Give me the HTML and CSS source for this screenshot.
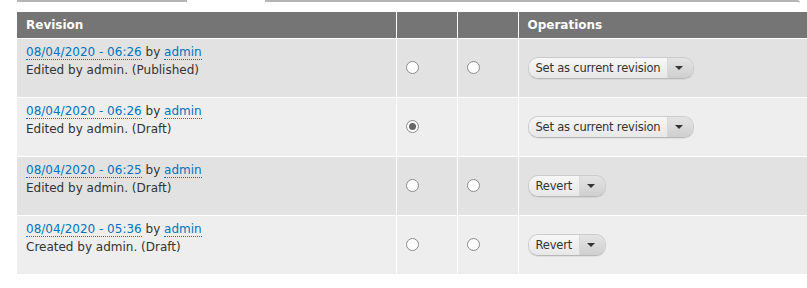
FILE: index.html
```html
<!DOCTYPE html>
<html>
<head>
<meta charset="utf-8">
<link rel="stylesheet" href="styles.css">
</head>
<body>
<div class="tabs">
  <div class="tab-line tab-a"></div>
  <div class="tab-gap"></div>
  <div class="tab-line tab-b"></div>
</div>
<table class="revisions">
  <thead>
    <tr>
      <th class="col-rev">Revision</th>
      <th class="col-radio"></th>
      <th class="col-radio"></th>
      <th class="col-ops">Operations</th>
    </tr>
  </thead>
  <tbody>
    <tr class="odd">
      <td class="rev"><a href="#">08/04/2020 - 06:26</a> by <a href="#">admin</a><br>Edited by admin. (Published)</td>
      <td class="radio-cell"><span class="radio"></span></td>
      <td class="radio-cell"><span class="radio"></span></td>
      <td class="ops"><span class="dropbutton"><span class="action">Set as current revision</span><span class="toggle"><span class="arrow"></span></span></span></td>
    </tr>
    <tr class="even">
      <td class="rev"><a href="#">08/04/2020 - 06:26</a> by <a href="#">admin</a><br>Edited by admin. (Draft)</td>
      <td class="radio-cell"><span class="radio checked"></span></td>
      <td class="radio-cell"></td>
      <td class="ops"><span class="dropbutton"><span class="action">Set as current revision</span><span class="toggle"><span class="arrow"></span></span></span></td>
    </tr>
    <tr class="odd">
      <td class="rev"><a href="#">08/04/2020 - 06:25</a> by <a href="#">admin</a><br>Edited by admin. (Draft)</td>
      <td class="radio-cell"><span class="radio"></span></td>
      <td class="radio-cell"><span class="radio"></span></td>
      <td class="ops"><span class="dropbutton"><span class="action">Revert</span><span class="toggle"><span class="arrow"></span></span></span></td>
    </tr>
    <tr class="even">
      <td class="rev"><a href="#">08/04/2020 - 05:36</a> by <a href="#">admin</a><br>Created by admin. (Draft)</td>
      <td class="radio-cell"><span class="radio"></span></td>
      <td class="radio-cell"><span class="radio"></span></td>
      <td class="ops"><span class="dropbutton"><span class="action">Revert</span><span class="toggle"><span class="arrow"></span></span></span></td>
    </tr>
  </tbody>
</table>
<div class="bottom-button"></div>
</body>
</html>
```
FILE: styles.css
```css
html, body {
  margin: 0;
  padding: 0;
  background: #fff;
  overflow: hidden;
}
body {
  width: 807px;
  height: 288px;
  font-family: "DejaVu Sans", Verdana, sans-serif;
  font-size: 12px;
  color: #333;
}
.tabs {
  display: flex;
  padding-left: 17px;
  height: 12px;
}
.tab-line {
  border-top: 2px solid #b4b4b4;
}
.tab-a { width: 170px; }
.tab-gap { width: 78px; }
.tab-b { width: 535px; border-top-right-radius: 3px; }
.revisions {
  margin-left: 17px;
  width: 810px;
  border-collapse: collapse;
  table-layout: fixed;
}
.revisions th {
  background: #757575;
  color: #fff;
  font-weight: bold;
  text-align: left;
  height: 26px;
  padding: 0 9px;
  border-left: 1px solid #fff;
  border-bottom: 1px solid #fff;
  line-height: 18px;
  box-sizing: border-box;
}
.revisions th:first-child, .revisions td:first-child { border-left: none; }
.col-rev { width: 379px; }
.col-radio { width: 61px; }
.revisions td {
  height: 58px;
  padding: 0;
  border-left: 1px solid #fff;
  border-bottom: 1px solid #fff;
  line-height: 18px;
  vertical-align: middle;
}
.revisions tr.odd td { background: #e2e2e2; }
.revisions tr.even td { background: #eeeeee; }
.revisions td.rev {
  vertical-align: top;
  padding: 4px 9px 0 9px;
  box-sizing: border-box;
}
.revisions a {
  color: #0074bd;
  text-decoration: none;
  border-bottom: 1px dotted #0074bd;
}
.radio-cell {
  padding-left: 9px !important;
}
.radio {
  display: block;
  width: 11px;
  height: 11px;
  border: 1px solid #8a8a8a;
  border-radius: 50%;
  background: #fff;
  position: relative;
}
.radio.checked::after {
  content: "";
  position: absolute;
  left: 2px;
  top: 2px;
  width: 7px;
  height: 7px;
  border-radius: 50%;
  background: #666;
}
.ops {
  padding-left: 9px !important;
}
.dropbutton {
  display: inline-flex;
  height: 20px;
  border: 1px solid #cbcbcb;
  border-bottom-color: #b8b8b8;
  border-radius: 10px;
  overflow: hidden;
  vertical-align: middle;
  box-shadow: 0 1px 1px rgba(0,0,0,0.06);
}
.action {
  padding: 0 7px 0 7px;
  line-height: 20px;
  background: linear-gradient(#f7f7f7, #e7e7e7);
  color: #333;
  font-size: 11.5px;
  letter-spacing: -0.2px;
}
.toggle {
  width: 25px;
  background: linear-gradient(#e4e4e4, #cfcfcf);
  border-left: 1px solid #d8d8d8;
  display: flex;
  align-items: center;
  justify-content: center;
}
.arrow {
  width: 0;
  height: 0;
  border-left: 4px solid transparent;
  border-right: 4px solid transparent;
  border-top: 4px solid #333;
  margin-right: 3px;
}
.bottom-button {
  margin: 13px 0 0 37px;
  width: 187px;
  height: 10px;
  border-top: 1px solid #d8d8d8;
  border-radius: 4px 4px 0 0;
}
```
